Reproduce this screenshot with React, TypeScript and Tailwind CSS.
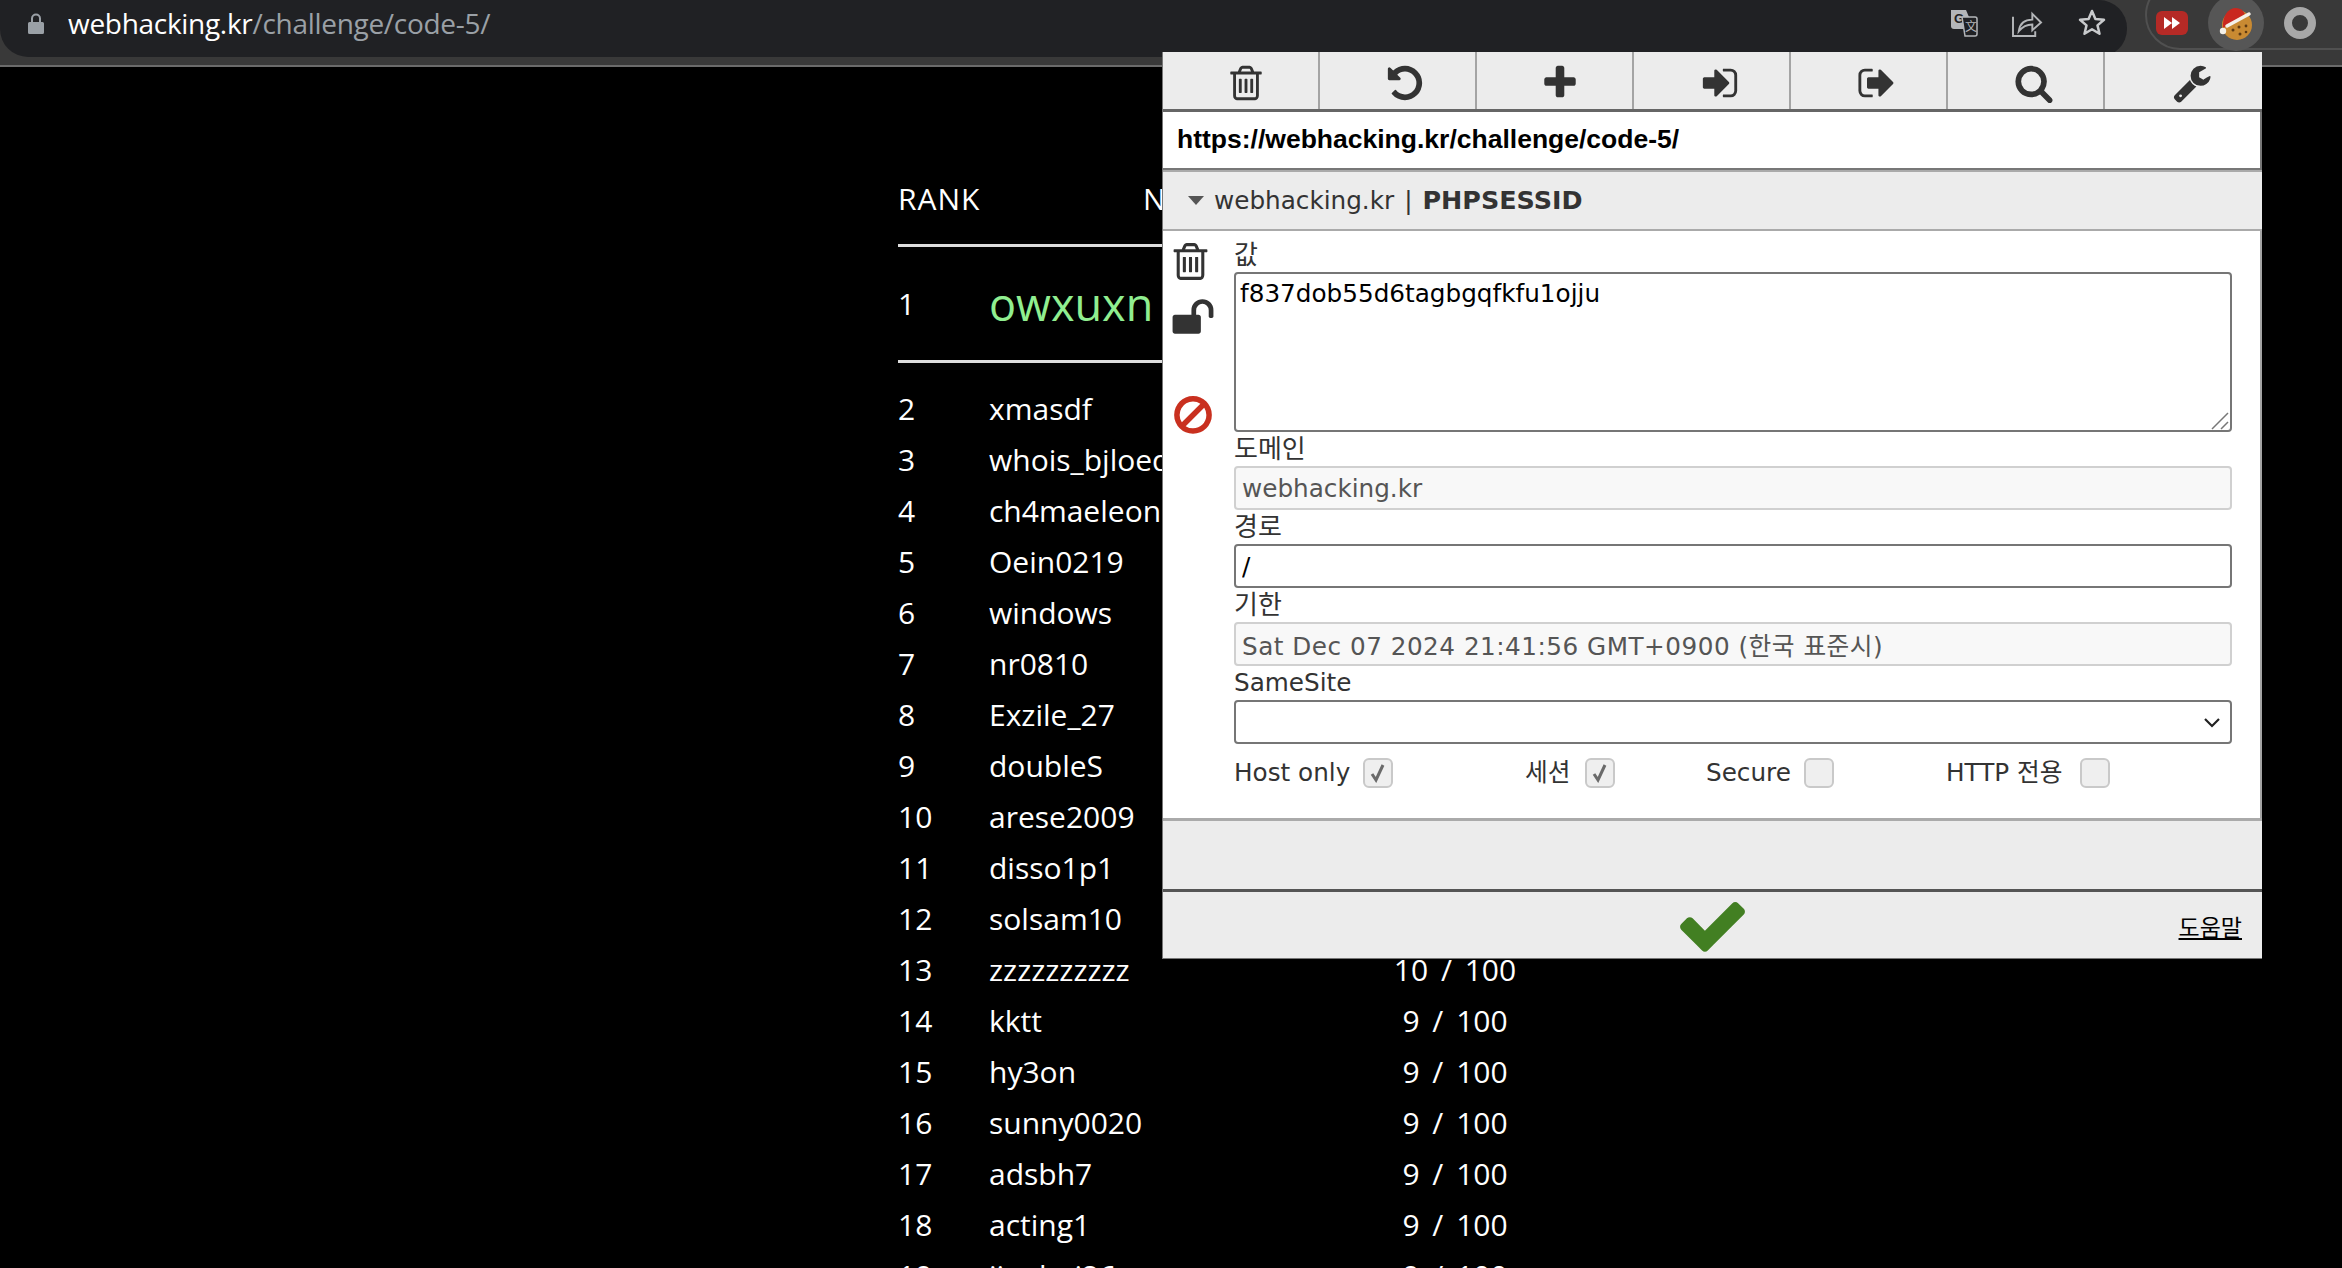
import type { ReactNode } from 'react';

const FA = {
  trash: 'M704 736v576q0 14-9 23t-23 9h-64q-14 0-23-9t-9-23v-576q0-14 9-23t23-9h64q14 0 23 9t9 23zm256 0v576q0 14-9 23t-23 9h-64q-14 0-23-9t-9-23v-576q0-14 9-23t23-9h64q14 0 23 9t9 23zm256 0v576q0 14-9 23t-23 9h-64q-14 0-23-9t-9-23v-576q0-14 9-23t23-9h64q14 0 23 9t9 23zm128 724v-948h-896v948q0 22 7 40.5t14.5 27 10.5 8.5h832q3 0 10.5-8.5t14.5-27 7-40.5zm-672-1076h448l-48-117q-7-9-17-11h-317q-10 2-17 11zm928 32v64q0 14-9 23t-23 9h-96v948q0 83-47 143.5t-113 60.5h-832q-66 0-113-58.5t-47-141.5v-952h-96q-14 0-23-9t-9-23v-64q0-14 9-23t23-9h309l70-167q15-37 54-63t79-26h320q40 0 79 26t54 63l70 167h309q14 0 23 9t9 23z',
  undo: 'M1664 896q0 156-61 298t-164 245-245 164-298 61q-172 0-327-72.5t-264-204.5q-7-10-6.5-22.5t8.5-20.5l137-138q10-9 25-9 16 2 23 12 73 95 179 147t225 52q104 0 198.5-40.5t163.5-109.5 109.5-163.5 40.5-198.5-40.5-198.5-109.5-163.5-163.5-109.5-198.5-40.5q-98 0-188 35.5t-160 101.5l137 138q31 30 14 69-17 40-59 40h-448q-26 0-45-19t-19-45v-448q0-42 40-59 39-17 69 14l130 129q107-101 244.5-156.5t284.5-55.5q156 0 298 61t245 164 164 245 61 298z',
  plus: 'M1600 736v192q0 40-28 68t-68 28h-416v416q0 40-28 68t-68 28h-192q-40 0-68-28t-28-68v-416h-416q-40 0-68-28t-28-68v-192q0-40 28-68t68-28h416v-416q0-40 28-68t68-28h192q40 0 68 28t28 68v416h416q40 0 68 28t28 68z',
  signIn: 'M1312 896q0 26-19 45l-544 544q-19 19-45 19t-45-19-19-45v-288h-448q-26 0-45-19t-19-45v-384q0-26 19-45t45-19h448v-288q0-26 19-45t45-19 45 19l544 544q19 19 19 45zm352-352v704q0 119-84.5 203.5t-203.5 84.5h-320q-13 0-22.5-9.5t-9.5-22.5q0-4-1-20t-.5-26.5 3-23.5 10-19.5 20.5-6.5h320q66 0 113-47t47-113v-704q0-66-47-113t-113-47h-288-11-13t-11.5-1-11.5-3-8-5.5-7-9-2-13.5q0-4-1-20t-.5-26.5 3-23.5 10-19.5 20.5-6.5h320q119 0 203.5 84.5t84.5 203.5z',
  signOut: 'M704 1440q0 4 1 20t.5 26.5-3 23.5-10 19.5-20.5 6.5h-320q-119 0-203.5-84.5t-84.5-203.5v-704q0-119 84.5-203.5t203.5-84.5h320q13 0 22.5 9.5t9.5 22.5q0 4 1 20t.5 26.5-3 23.5-10 19.5-20.5 6.5h-320q-66 0-113 47t-47 113v704q0 66 47 113t113 47h312l11.5 1 11.5 3 8 5.5 7 9 2 13.5zm928-544q0 26-19 45l-544 544q-19 19-45 19t-45-19-19-45v-288h-448q-26 0-45-19t-19-45v-384q0-26 19-45t45-19h448v-288q0-26 19-45t45-19 45 19l544 544q19 19 19 45z',
  search: 'M1216 832q0-185-131.5-316.5t-316.5-131.5-316.5 131.5-131.5 316.5 131.5 316.5 316.5 131.5 316.5-131.5 131.5-316.5zm512 832q0 52-38 90t-90 38q-54 0-90-38l-343-342q-179 124-399 124-143 0-273.5-55.5t-225-150-150-225-55.5-273.5 55.5-273.5 150-225 225-150 273.5-55.5 273.5 55.5 225 150 150 225 55.5 273.5q0 220-124 399l343 343q37 37 37 90z',
  wrench: 'M448 1472q0-26-19-45t-45-19-45 19-19 45 19 45 45 19 45-19 19-45zm644-420l-682 682q-37 37-90 37-52 0-91-37l-106-108q-38-36-38-90 0-53 38-91l681-681q39 98 114.5 173.5t173.5 114.5zm634-435q0 39-23 106-47 134-164.5 217.5t-258.5 83.5q-185 0-316.5-131.5t-131.5-316.5 131.5-316.5 316.5-131.5q58 0 121.5 16.5t107.5 46.5q16 11 16 28t-16 28l-293 169v224l193 107q5-3 79-48.5t135.5-81 70.5-35.5q15 0 23.5 10t8.5 25z',
  unlock: 'M1728 576v256q0 26-19 45t-45 19h-64q-26 0-45-19t-19-45v-256q0-106-75-181t-181-75-181 75-75 181v192h96q40 0 68 28t28 68v576q0 40-28 68t-68 28h-960q-40 0-68-28t-28-68v-576q0-40 28-68t68-28h672v-192q0-185 131.5-316.5t316.5-131.5 316.5 131.5 131.5 316.5z',
  ban: 'M1440 893q0-161-87-295l-754 753q137 89 297 89 111 0 211.5-43.5t173.5-116.5 116-174.5 43-212.5zm-999 299l755-754q-135-91-300-91-148 0-273 73t-198 199-73 274q0 162 89 299zm1223-299q0 157-61 300t-163.5 246-245 164-298.5 61-298.5-61-245-164-163.5-246-61-300 61-299.5 163.5-245.5 245-164 298.5-61 298.5 61 245 164 163.5 245.5 61 299.5z',
  check: 'M1671 566q0 40-28 68l-724 724-136 136q-28 28-68 28t-68-28l-136-136-362-362q-28-28-28-68t28-68l136-136q28-28 68-28t68 28l294 295 656-657q28-28 68-28t68 28l136 136q28 28 28 68z',
};

function Fa({ d, className }: { d: string; className: string }) {
  return (
    <svg viewBox="0 0 1792 1792" className={className} fill="currentColor">
      <path d={d} />
    </svg>
  );
}

const rows: [number, string, string][] = [
  [2, 'xmasdf', ''],
  [3, 'whois_bjloed', ''],
  [4, 'ch4maeleon', ''],
  [5, 'Oein0219', ''],
  [6, 'windows', ''],
  [7, 'nr0810', ''],
  [8, 'Exzile_27', ''],
  [9, 'doubleS', ''],
  [10, 'arese2009', ''],
  [11, 'disso1p1', ''],
  [12, 'solsam10', ''],
  [13, 'zzzzzzzzzz', '10 / 100'],
  [14, 'kktt', '9 / 100'],
  [15, 'hy3on', '9 / 100'],
  [16, 'sunny0020', '9 / 100'],
  [17, 'adsbh7', '9 / 100'],
  [18, 'acting1', '9 / 100'],
  [19, 'jjeolmi26', '9 / 100'],
];

const tools = [
  { d: FA.trash, pad: 'pl-[11px]' },
  { d: FA.undo, pad: 'pl-[14px]' },
  { d: FA.plus, pad: 'pl-[11px]' },
  { d: FA.signIn, pad: 'pl-[17px]' },
  { d: FA.signOut, pad: 'pl-[17px]' },
  { d: FA.search, pad: 'pl-[17px]' },
  { d: FA.wrench, pad: 'pl-[17px]' },
];

function BrowserBar() {
  return (
    <div className="flex h-[67px] border-b-2 border-[#6b6b6b] bg-[#393939] font-['Open_Sans',sans-serif]">
      <div className="flex h-[57px] w-[2127px] items-center rounded-r-[28px] rounded-bl-[28px] bg-[#202124] pb-[11px]">
        <svg viewBox="0 0 16 21" className="ml-[28px] h-[21px] w-[16px] fill-[#9aa0a6]">
          <path d="M3 9V5.5a5 5 0 0 1 10 0V9h1.5A1.5 1.5 0 0 1 16 10.500v9a1.500 1.500 0 0 1-1.500 1.500h-13A1.500 1.500 0 0 1 0 19.500v-9A1.500 1.500 0 0 1 1.500 9zm2 0h6V5.500a3 3 0 0 0-6 0z" />
        </svg>
        <div className="ml-[24px] text-[28px] leading-none tracking-[-0.3px] text-white">
          webhacking.kr<span className="text-[#9aa0a6]">/challenge/code-5/</span>
        </div>
        <div className="ml-auto flex items-center gap-[34px] pr-[20px]">
          <svg viewBox="0 0 28 28" className="h-[28px] w-[28px]">
            <path d="M1 1h15l3 7v12H4a3 3 0 0 1-3-3z" fill="#b4b6b9" />
            <text x="4" y="14" fontSize="13" fontWeight="700" fontFamily="Liberation Sans, sans-serif" fill="#202124">G</text>
            <path d="M12 8h13a2 2 0 0 1 2 2v15a2 2 0 0 1-2 2H15z" fill="#202124" stroke="#b4b6b9" strokeWidth="1.500" />
            <text x="15" y="22" fontSize="12" fontFamily="Noto Sans CJK SC, sans-serif" fill="#b4b6b9">文</text>
          </svg>
          <svg viewBox="0 0 32 30" className="h-[29px] w-[31px]" fill="none" stroke="#b4b6b9" strokeWidth="2">
            <path d="M1 8v20h23v-5" />
            <path d="M7 23c1-8 6-12 14-12V5l9 9-9 8v-6c-6 0-10 2-14 7z" />
          </svg>
          <svg viewBox="0 0 30 30" className="h-[30px] w-[30px]" fill="none" stroke="#c8cacc" strokeWidth="2.500">
            <path d="M15 3l3.400 8 8.600.8-6.500 5.600 2 8.400L15 21.300 7.500 25.800l2-8.400L3 11.800l8.600-.8z" strokeLinejoin="round" />
          </svg>
        </div>
      </div>
      <div className="relative flex-1">
        <div className="absolute left-[18px] top-[-20px] h-[70px] w-[240px] rounded-[35px] border-2 border-[#505050]" />
        <div className="absolute left-[81px] top-[-5px] h-[56px] w-[56px] rounded-full bg-[#565656]" />
        <svg viewBox="0 0 32 24" className="absolute left-[29px] top-[11px] h-[24px] w-[32px]">
          <rect width="32" height="24" rx="6" fill="#b52a26" />
          <path d="M8 6l8 6-8 6zM16 6l8 6-8 6z" fill="#fff" />
        </svg>
        <svg viewBox="0 0 34 34" className="absolute left-[92px] top-[6px] h-[34px] w-[34px]">
          <circle cx="18" cy="19" r="15" fill="#c98a32" />
          <circle cx="14" cy="24" r="1.500" fill="#5e3a12" />
          <circle cx="20" cy="21" r="1.500" fill="#5e3a12" />
          <circle cx="21" cy="28" r="1.500" fill="#5e3a12" />
          <circle cx="27" cy="20" r="1.400" fill="#5e3a12" />
          <circle cx="27" cy="26" r="1.300" fill="#5e3a12" />
          <path d="M4 22C3 10 9 2 17 2c4 0 7 2 9 6L9 19z" fill="#c9281f" />
          <path d="M8 20L30 8" stroke="#f4f1ea" strokeWidth="3.500" strokeLinecap="round" />
          <circle cx="4" cy="25" r="3.200" fill="#f4f1ea" />
        </svg>
        <div className="absolute left-[157px] top-[7px] h-[32px] w-[32px] rounded-full border-[8px] border-[#a8a8a8]" />
      </div>
    </div>
  );
}

function Ranking() {
  return (
    <div className="pl-[898px] font-['Open_Sans',sans-serif] text-[30px] text-white">
      <div className="mt-[111px] flex h-[40px] items-center">
        <div className="w-[245px] tracking-[1px]">RANK</div>
        <div>NAME</div>
      </div>
      <div className="mt-[26px] h-[3px] w-[660px] bg-[#dedede]" />
      <div className="flex h-[113px] items-center">
        <div className="w-[91px]">1</div>
        <div className="text-[45px] text-[#90ee90]">owxuxn</div>
      </div>
      <div className="h-[3px] w-[660px] bg-[#dedede]" />
      <div className="pt-[20px]">
        {rows.map(([rank, name, score]) => (
          <div key={rank} className="flex h-[51px] items-center">
            <div className="w-[91px]">{rank}</div>
            <div className="w-[361px] whitespace-nowrap">{name}</div>
            <div className="w-[210px] text-center [word-spacing:5px]">{score}</div>
          </div>
        ))}
      </div>
    </div>
  );
}

function FieldLabel({ children }: { children: ReactNode }) {
  return <div className="flex h-[34px] items-center">{children}</div>;
}

function KoLabel({ children }: { children: ReactNode }) {
  return <div className="flex h-[34px] items-center text-[26px]">{children}</div>;
}

function Check({ label, checked, className }: { label: string; checked?: boolean; className: string }) {
  return (
    <div className={`flex items-center ${className}`}>
      <span>{label}</span>
      <div className="flex h-[30px] w-[30px] items-center justify-center rounded-[6px] border-2 border-[#c9c9c9] bg-[#efefef]">
        {checked && (
          <svg viewBox="0 0 16 18" className="h-[20px] w-[16px]">
            <path d="M2 10l4 6 7-15" fill="none" stroke="#6a6a6a" strokeWidth="3" />
          </svg>
        )}
      </div>
    </div>
  );
}

function CookiePopup() {
  const inputCls = 'block h-[44px] w-full rounded-[4px] border-2 px-[4px] outline-none';
  return (
    <div className="absolute left-[1162px] top-[52px] flex h-[907px] w-[1100px] flex-col border-b border-l border-[#777] bg-[#ececec] font-['DejaVu_Sans','Noto_Sans_CJK_KR',sans-serif] text-[24.700px] text-[#333]">
      <div className="grid h-[60px] shrink-0 grid-cols-7 border-b-[3px] border-[#666]">
        {tools.map((t, i) => (
          <div key={i} className={`flex items-center justify-center border-r-2 border-[#a4a4a4] pt-[5px] last:border-r-0 ${t.pad}`}>
            <Fa d={t.d} className="h-[40px] w-[40px]" />
          </div>
        ))}
      </div>
      <div className="flex h-[58px] shrink-0 items-center border-r-2 border-b-2 border-[#777] bg-white pl-[14px] font-['Liberation_Sans',sans-serif] text-[26.500px] font-bold text-black">
        https://webhacking.kr/challenge/code-5/
      </div>
      <div className="flex h-[61px] shrink-0 items-center border-y-2 border-[#aaa] pl-[25px]">
        <div className="mr-[10px] h-0 w-0 border-x-[8px] border-t-[9px] border-x-transparent border-t-[#555]" />
        <span>webhacking.kr</span>
        <span className="mx-[10px]">|</span>
        <b className="text-[25.400px]">PHPSESSID</b>
      </div>
      <div className="flex h-[587px] shrink-0 border-r-2 border-[#a4a4a4] bg-white">
        <div className="flex w-[71px] flex-col pl-[8px] pt-[9px] text-[#333]">
          <Fa d={FA.trash} className="-ml-[2px] h-[43px] w-[43px]" />
          <Fa d={FA.unlock} className="mt-[13px] h-[44px] w-[44px]" />
          <Fa d={FA.ban} className="mt-[53px] h-[44px] w-[44px] text-[#c9301f]" />
        </div>
        <div className="w-[998px] pt-[7px]">
          <KoLabel>값</KoLabel>
          <div className="relative">
            <textarea
              readOnly
              value="f837dob55d6tagbgqfkfu1ojju"
              className="block h-[160px] w-full resize-none rounded-[4px] border-2 border-[#767676] bg-white px-[4px] py-[1px] text-black outline-none"
            />
            <svg viewBox="0 0 18 18" className="absolute bottom-[2px] right-[3px] h-[18px] w-[18px]" stroke="#777" strokeWidth="1.500">
              <path d="M1 17L17 1M10 17l7-7" />
            </svg>
          </div>
          <KoLabel>도메인</KoLabel>
          <input readOnly value="webhacking.kr" className={`${inputCls} border-[#d0d0d0] bg-[#f8f8f8] pl-[6px] text-[#555]`} />
          <KoLabel>경로</KoLabel>
          <input readOnly value="/" className={`${inputCls} border-[#767676] bg-white pl-[6px] text-black`} />
          <KoLabel>기한</KoLabel>
          <input readOnly value="Sat Dec 07 2024 21:41:56 GMT+0900 (한국 표준시)" className={`${inputCls} border-[#d0d0d0] bg-[#f8f8f8] pl-[6px] tracking-[0.5px] text-[#555]`} />
          <FieldLabel>SameSite</FieldLabel>
          <div className="relative">
            <select className="block h-[44px] w-full appearance-none rounded-[4px] border-2 border-[#767676] bg-white outline-none" />
            <svg viewBox="0 0 16 10" className="absolute right-[12px] top-[18px] h-[10px] w-[16px]" fill="none" stroke="#222" strokeWidth="2.200">
              <path d="M1 1l7 7 7-7" />
            </svg>
          </div>
          <div className="mt-[12px] flex h-[34px] items-center">
            <Check label="Host only" checked className="w-[291px] gap-[13px]" />
            <Check label="세션" checked className="w-[181px] gap-[15px]" />
            <Check label="Secure" className="w-[240px] gap-[13px]" />
            <Check label="HTTP 전용" className="gap-[18px]" />
          </div>
        </div>
      </div>
      <div className="h-[71px] shrink-0 border-t-[3px] border-[#aaa]" />
      <div className="relative flex min-h-0 flex-1 items-center justify-center border-t-[3px] border-[#555]">
        <Fa d={FA.check} className="h-[75px] w-[75px] shrink-0 text-[#427f22]" />
        <span className="absolute right-[20px] top-[19px] text-[23px] text-black underline">도움말</span>
      </div>
    </div>
  );
}

export default function App() {
  return (
    <div className="relative h-[1268px] w-[2342px] overflow-hidden bg-black">
      <BrowserBar />
      <Ranking />
      <CookiePopup />
    </div>
  );
}
